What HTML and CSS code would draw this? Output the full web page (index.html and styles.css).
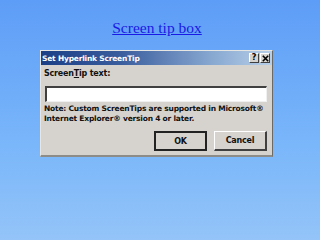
FILE: index.html
```html
<!DOCTYPE html>
<html>
<head>
<meta charset="utf-8">
<link rel="stylesheet" href="styles.css">
</head>
<body>
<div class="slide">
  <h1 class="heading"><a href="#">Screen tip box</a></h1>
  <div class="dialog">
    <div class="titlebar">
      <span class="title">Set Hyperlink ScreenTip</span>
      <span class="tbtns">
        <span class="tbtn">?</span>
        <span class="tbtn">
          <svg width="7" height="7" viewBox="0 0 7 7"><path d="M0.8 0.8 L6.2 6.2 M6.2 0.8 L0.8 6.2" stroke="#000" stroke-width="1.6"/></svg>
        </span>
      </span>
    </div>
    <div class="content">
      <div class="label">Screen<u>T</u>ip text:</div>
      <div class="input"></div>
      <div class="note">Note: Custom ScreenTips are supported in Microsoft®<br>Internet Explorer® version 4 or later.</div>
      <div class="buttons">
        <div class="btn default">OK</div>
        <div class="btn">Cancel</div>
      </div>
    </div>
  </div>
</div>
</body>
</html>
```

FILE: styles.css
```css
html, body {
  margin: 0;
  padding: 0;
}
body {
  width: 320px;
  height: 240px;
  overflow: hidden;
  background: linear-gradient(to bottom, #5e9df7 0%, #79b6fa 60%, #94c4f8 100%);
}
.slide {
  width: 320px;
  height: 240px;
  display: flex;
  flex-direction: column;
}
.heading {
  margin: 0;
  padding-top: 20px;
  padding-right: 6px;
  height: 50px;
  box-sizing: border-box;
  text-align: center;
  font-family: "Liberation Serif", serif;
  font-weight: normal;
  font-size: 15.5px;
  line-height: 16px;
}
.heading a {
  color: #1a1ae6;
  text-decoration: underline;
}
.dialog {
  margin-left: 40px;
  width: 233px;
  height: 107px;
  box-sizing: border-box;
  background: #d6d3ce;
  border-top: 1px solid #e8e6e2;
  border-left: 1px solid #e8e6e2;
  border-right: 1px solid #6b6a66;
  border-bottom: 2px solid #8e8c88;
  display: flex;
  flex-direction: column;
}
.titlebar {
  height: 14px;
  background: linear-gradient(to right, #1b3f86 0%, #3b5e9e 35%, #8aaad2 75%, #b8cfe8 100%);
  display: flex;
  align-items: center;
  justify-content: space-between;
  padding: 0 2px 0 1px;
}
.title {
  color: #fff;
  font-family: "DejaVu Sans", sans-serif;
  font-weight: bold;
  font-size: 7.5px;
  letter-spacing: -0.2px;
}
.tbtns {
  display: flex;
  gap: 1px;
}
.tbtn {
  width: 10px;
  height: 10px;
  box-sizing: border-box;
  background: #d6d3ce;
  border-top: 1px solid #fff;
  border-left: 1px solid #fff;
  border-right: 1px solid #404040;
  border-bottom: 1px solid #404040;
  font-family: "DejaVu Sans", sans-serif;
  font-weight: bold;
  font-size: 8px;
  line-height: 8px;
  color: #000;
  display: flex;
  align-items: center;
  justify-content: center;
}
.content {
  padding: 0 5px 0 3px;
  font-family: "DejaVu Sans", sans-serif;
  font-weight: bold;
  font-size: 8px;
  color: #111;
  letter-spacing: -0.2px;
}
.label {
  height: 12px;
  line-height: 12px;
  margin-top: 3px;
}
.input {
  margin-top: 6px;
  margin-left: 1px;
  height: 16px;
  box-sizing: border-box;
  background: #fff;
  border-top: 2px solid #404040;
  border-left: 2px solid #404040;
  border-right: 1px solid #f0f0f0;
  border-bottom: 1px solid #f0f0f0;
}
.note {
  margin-top: 2px;
  line-height: 10px;
  font-size: 7.5px;
  white-space: nowrap;
}
.buttons {
  display: flex;
  justify-content: flex-end;
  gap: 7px;
  margin-top: 7px;
}
.btn {
  width: 53px;
  height: 20px;
  box-sizing: border-box;
  border-top: 1px solid #fff;
  border-left: 1px solid #fff;
  border-right: 2px solid #404040;
  border-bottom: 2px solid #404040;
  display: flex;
  align-items: center;
  justify-content: center;
  background: #d6d3ce;
}
.btn.default {
  border: 2px solid #222;
}
```
